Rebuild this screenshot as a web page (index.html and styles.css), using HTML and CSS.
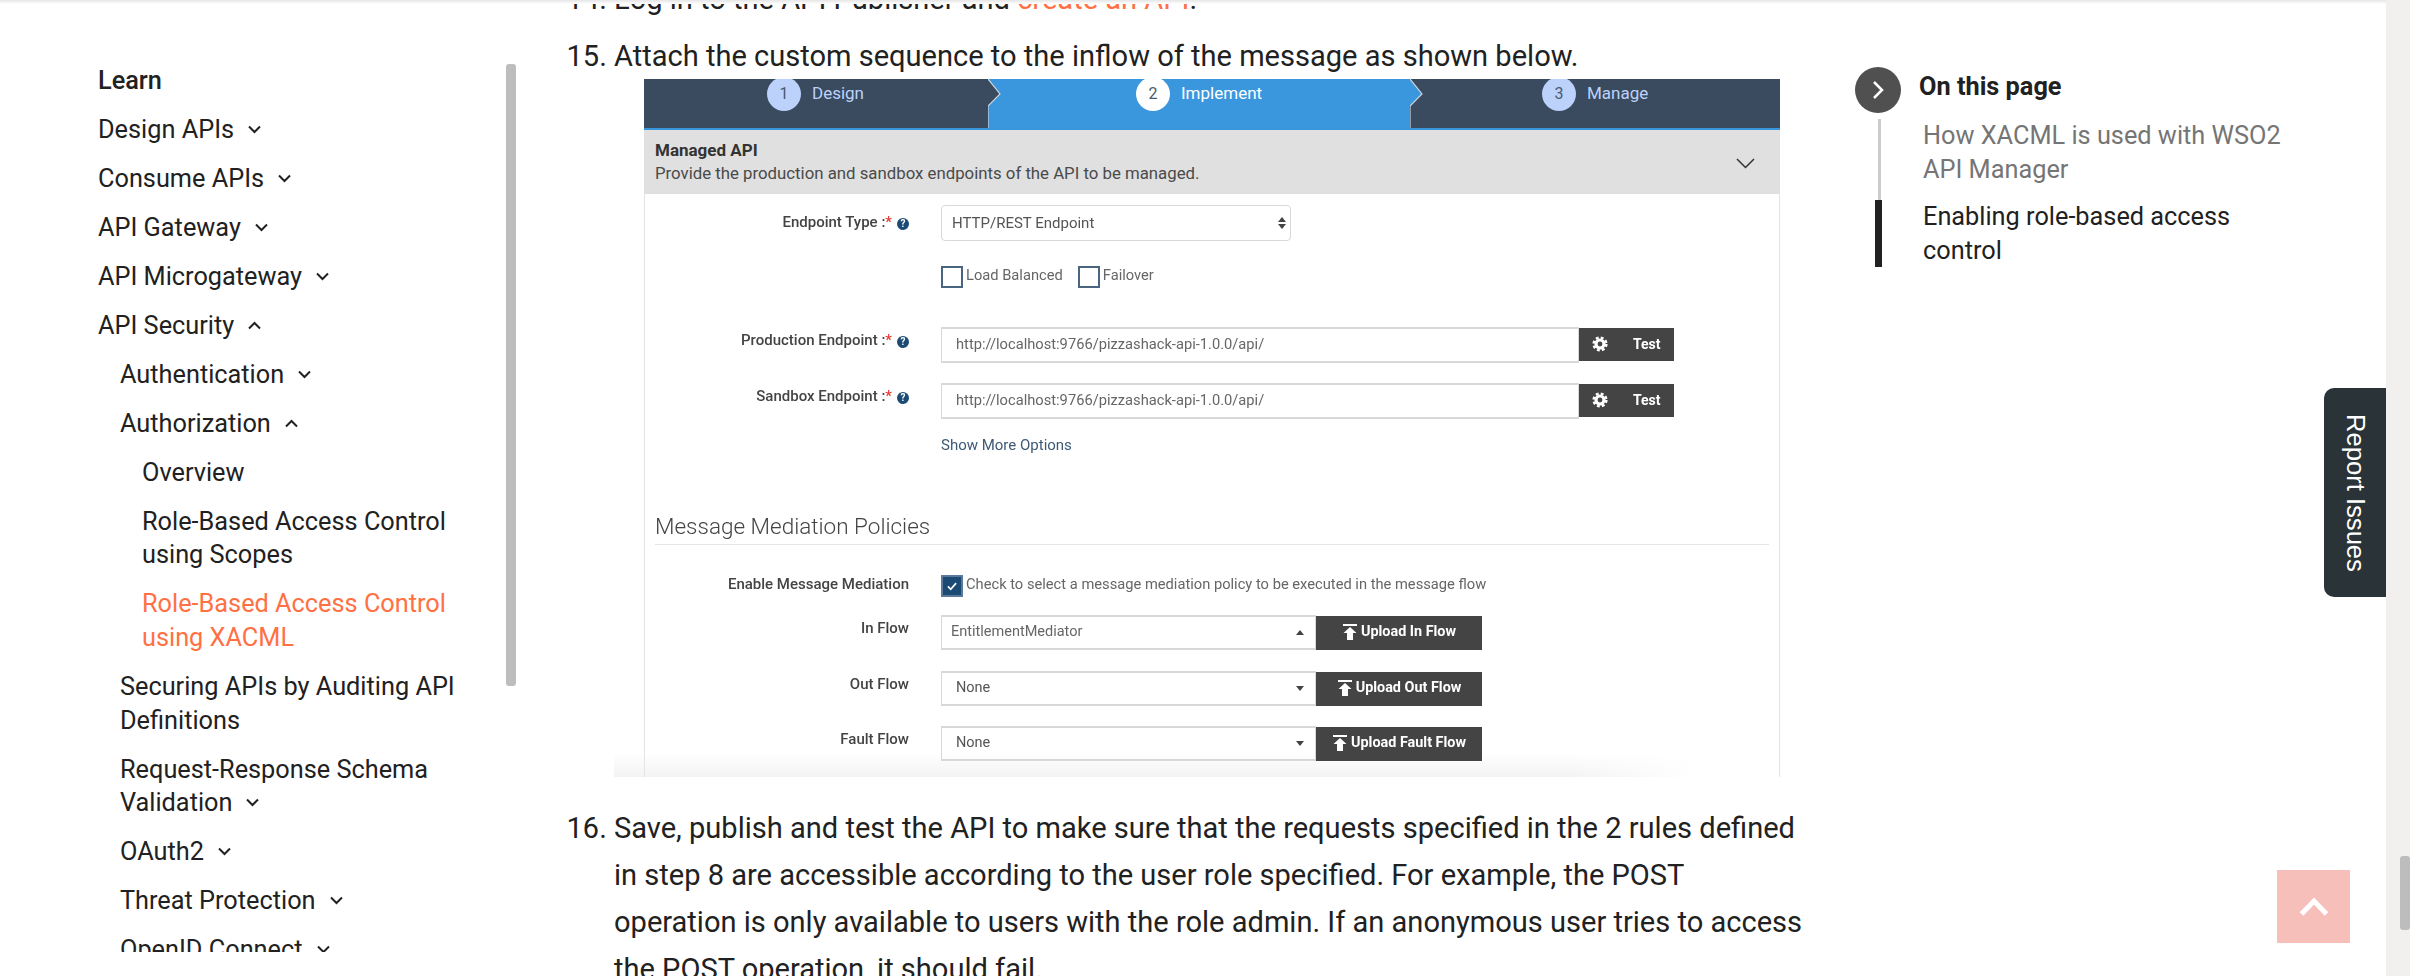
FILE: index.html
```html
<!DOCTYPE html>
<html>
<head>
  <title>Role-Based Access Control using XACML</title>
  <link rel="stylesheet" href="styles.css">
</head>
<body>

<div class="sidebar">
  <nav class="nav">
    <div class="nav-title">Learn</div>
    <ul class="nav-list">
      <li><a>Design APIs<svg class="chev" viewBox="0 0 13 9"><path d="M1 1.5l5.5 5.5 5.5-5.5"/></svg></a></li>
      <li><a>Consume APIs<svg class="chev" viewBox="0 0 13 9"><path d="M1 1.5l5.5 5.5 5.5-5.5"/></svg></a></li>
      <li><a>API Gateway<svg class="chev" viewBox="0 0 13 9"><path d="M1 1.5l5.5 5.5 5.5-5.5"/></svg></a></li>
      <li><a>API Microgateway<svg class="chev" viewBox="0 0 13 9"><path d="M1 1.5l5.5 5.5 5.5-5.5"/></svg></a></li>
      <li><a>API Security<svg class="chev" viewBox="0 0 13 9"><path d="M1 7.5l5.5-5.5 5.5 5.5"/></svg></a>
        <ul class="nav-list">
          <li><a>Authentication<svg class="chev" viewBox="0 0 13 9"><path d="M1 1.5l5.5 5.5 5.5-5.5"/></svg></a></li>
          <li><a>Authorization<svg class="chev" viewBox="0 0 13 9"><path d="M1 7.5l5.5-5.5 5.5 5.5"/></svg></a>
            <ul class="nav-list">
              <li><a>Overview</a></li>
              <li><a>Role-Based Access Control using Scopes</a></li>
              <li><a class="active">Role-Based Access Control using XACML</a></li>
            </ul>
          </li>
          <li><a>Securing APIs by Auditing API Definitions</a></li>
          <li><a>Request-Response Schema Validation<svg class="chev" viewBox="0 0 13 9"><path d="M1 1.5l5.5 5.5 5.5-5.5"/></svg></a></li>
          <li><a>OAuth2<svg class="chev" viewBox="0 0 13 9"><path d="M1 1.5l5.5 5.5 5.5-5.5"/></svg></a></li>
          <li><a>Threat Protection<svg class="chev" viewBox="0 0 13 9"><path d="M1 1.5l5.5 5.5 5.5-5.5"/></svg></a></li>
          <li><a>OpenID Connect<svg class="chev" viewBox="0 0 13 9"><path d="M1 1.5l5.5 5.5 5.5-5.5"/></svg></a></li>
        </ul>
      </li>
    </ul>
  </nav>
  <div class="nav-thumb"></div>
</div>

<main class="content">
  <ol class="steps-list" start="14">
    <li>Log in to the API Publisher and <a class="link">create an API</a>.</li>
    <li>Attach the custom sequence to the inflow of the message as shown below.
      <div class="shot">
        <div class="shot-inner">
          <div class="wizard">
            <div class="wizard-step step-one">
              <span class="step-num">1</span><span>Design</span>
              <svg class="step-arrow" viewBox="0 0 13 49"><path class="fill-dark" d="M0 0L12 15 0 27z"/><path class="edge" d="M0 0L12 15 0 27V49"/></svg>
            </div>
            <div class="wizard-step step-two">
              <span class="step-num">2</span><span>Implement</span>
              <svg class="step-arrow" viewBox="0 0 13 49"><path class="fill-blue" d="M0 0L12 15 0 27z"/><path class="edge" d="M0 0L12 15 0 27V49"/></svg>
            </div>
            <div class="wizard-step step-three">
              <span class="step-num">3</span><span>Manage</span>
            </div>
          </div>

          <div class="panel-head">
            <div>
              <div class="panel-title">Managed API</div>
              <div class="panel-sub">Provide the production and sandbox endpoints of the API to be managed.</div>
            </div>
            <svg class="panel-chev" viewBox="0 0 19 11"><path d="M1 1l8.500 8.500L18 1"/></svg>
          </div>

          <div class="form">
            <div class="row row-type">
              <div class="lbl lbl-mid">Endpoint Type :<span class="req">*</span><span class="help">?</span></div>
              <div class="select">HTTP/REST Endpoint<span class="updown"><i class="up"></i><i class="down"></i></span></div>
            </div>
            <div class="row row-checks">
              <div class="lbl"></div>
              <span class="check"></span><span class="check-text">Load Balanced</span>
              <span class="check check-next"></span><span class="check-text">Failover</span>
            </div>
            <div class="row row-prod">
              <div class="lbl lbl-top">Production Endpoint :<span class="req">*</span><span class="help">?</span></div>
              <div class="url">http://localhost:9766/pizzashack-api-1.0.0/api/</div>
              <div class="btn btn-test"><svg class="gear" viewBox="0 0 16 16"><circle class="gear-teeth" cx="8" cy="8" r="6.300"/><circle class="gear-ring" cx="8" cy="8" r="4"/></svg>Test</div>
            </div>
            <div class="row row-sand">
              <div class="lbl lbl-top">Sandbox Endpoint :<span class="req">*</span><span class="help">?</span></div>
              <div class="url">http://localhost:9766/pizzashack-api-1.0.0/api/</div>
              <div class="btn btn-test"><svg class="gear" viewBox="0 0 16 16"><circle class="gear-teeth" cx="8" cy="8" r="6.300"/><circle class="gear-ring" cx="8" cy="8" r="4"/></svg>Test</div>
            </div>
            <div class="show-more">Show More Options</div>
            <div class="policies">Message Mediation Policies</div>
            <div class="row row-enable">
              <div class="lbl lbl-enable">Enable Message Mediation</div>
              <span class="check check-on"><svg viewBox="0 0 22 22"><path d="M6 11.500l3.500 3.500 6.500-7.500"/></svg></span>
              <span class="check-text">Check to select a message mediation policy to be executed in the message flow</span>
            </div>
            <div class="row row-in">
              <div class="lbl lbl-top">In Flow</div>
              <div class="flow-select flow-in">EntitlementMediator<i class="up"></i></div>
              <div class="btn btn-upload upload-in"><svg class="upload" viewBox="0 0 16 17"><path d="M1 0h14v2H1zM8 3l6.500 6H11v7H5V9H1.500z"/></svg>Upload In Flow</div>
            </div>
            <div class="row row-out">
              <div class="lbl lbl-top">Out Flow</div>
              <div class="flow-select">None<i class="down"></i></div>
              <div class="btn btn-upload upload-out"><svg class="upload" viewBox="0 0 16 17"><path d="M1 0h14v2H1zM8 3l6.500 6H11v7H5V9H1.500z"/></svg>Upload Out Flow</div>
            </div>
            <div class="row row-fault">
              <div class="lbl lbl-top">Fault Flow</div>
              <div class="flow-select">None<i class="down"></i></div>
              <div class="btn btn-upload upload-fault"><svg class="upload" viewBox="0 0 16 17"><path d="M1 0h14v2H1zM8 3l6.500 6H11v7H5V9H1.500z"/></svg>Upload Fault Flow</div>
            </div>
          </div>
        </div>
      </div>
    </li>
    <li>Save, publish and test the API to make sure that the requests specified in the 2 rules defined in step 8 are accessible according to the user role specified. For example, the POST operation is only available to users with the role admin. If an anonymous user tries to access the POST operation, it should fail.</li>
  </ol>
</main>

<aside class="toc">
  <div class="toc-head">
    <span class="toc-toggle"><svg viewBox="0 0 14 20"><path d="M3 2l8 8-8 8"/></svg></span>
    <span class="toc-title">On this page</span>
  </div>
  <ul class="toc-list">
    <li>How XACML is used with WSO2 API Manager</li>
    <li class="toc-current">Enabling role-based access control</li>
  </ul>
</aside>

<div class="scrollbar"><div class="scroll-thumb"></div></div>

<a class="report">Report Issues</a>
<a class="to-top"><svg viewBox="0 0 30 20"><path d="M2.500 17L15 4l12.500 13"/></svg></a>

</body>
</html>
```

FILE: styles.css
```css
* {
  box-sizing: border-box;
}

html, body {
  height: 976px;
  margin: 0;
  overflow: hidden;
}

body {
  display: flex;
  background-color: #fff;
  color: #212121;
  font: 25.300px/33.600px Roboto, sans-serif;
}

body::before {
  content: "";
  position: fixed;
  top: 0;
  left: 0;
  right: 0;
  height: 4px;
  background: linear-gradient(#e6e6e6, #fff);
}

/* left nav */
.sidebar {
  display: flex;
  flex: 0 0 530px;
  height: 888px;
  margin-top: 64px;
  padding-left: 98px;
}

.nav {
  width: 408px;
  height: 888px;
  overflow: hidden;
}

.nav-title {
  font-weight: 500;
  margin-bottom: 15.4px;
}

.nav-list {
  list-style: none;
  margin: 0;
  padding: 0;
}

.nav-list .nav-list {
  margin-top: 15.4px;
  padding-left: 22px;
}

.nav-list li {
  margin-bottom: 15.4px;
}

.nav-list li:last-child {
  margin-bottom: 0;
}

.active {
  color: #ff7043;
}

.chev {
  width: 13px;
  height: 9px;
  margin-left: 14px;
  vertical-align: 4px;
}

.chev path {
  fill: none;
  stroke: #212121;
  stroke-width: 2;
}

.nav-thumb {
  width: 10px;
  height: 622px;
  background-color: #bdbdbd;
  border-radius: 3px;
}

/* main column */
.content {
  flex: 0 0 1280px;
}

.steps-list {
  margin: -24px 0 0;
  padding-left: 84px;
  font-size: 29.050px;
  line-height: 47px;
}

.steps-list > li {
  margin-bottom: 10px;
}

.link {
  color: #ff7043;
}

/* picture of the publisher form */
.shot {
  position: relative;
  isolation: isolate;
  width: 1166px;
  margin-top: -1px;
  margin-bottom: 28px;
  padding-left: 30px;
  line-height: 20px;
}

.shot::after {
  content: "";
  position: absolute;
  z-index: -1;
  left: 0;
  right: 0;
  bottom: 0;
  height: 24px;
  background: linear-gradient(rgba(240, 240, 240, 0), #f3f3f3);
  -webkit-mask-image: linear-gradient(to right, #000 82%, transparent 93%);
  mask-image: linear-gradient(to right, #000 82%, transparent 93%);
}

.shot-inner {
  height: 698px;
  color: #444;
  filter: blur(0.4px);
}

.wizard {
  display: flex;
  height: 51px;
  overflow: hidden;
  font-size: 17px;
  line-height: 29px;
  border-bottom: 2px solid #3b97dd;
}

.wizard-step {
  position: relative;
  display: flex;
  gap: 11px;
  height: 49px;
  background-color: #3a4a5f;
  color: #bcd2fb;
}

.step-one {
  width: 344px;
  padding-left: 123px;
}

.step-two {
  width: 422px;
  padding-left: 148px;
  background-color: #3b97dd;
  color: #fff;
}

.step-three {
  width: 370px;
  padding-left: 132px;
}

.step-num {
  display: flex;
  align-items: center;
  justify-content: center;
  width: 34px;
  height: 34px;
  margin-top: -2px;
  padding-bottom: 1px;
  border-radius: 50%;
  background-color: #bcd2fb;
  color: #4a5a6e;
  font-size: 16px;
}

.step-two .step-num {
  background-color: #fff;
}

.step-arrow {
  position: absolute;
  left: 100%;
  top: 0;
  z-index: 1;
  width: 13px;
  height: 49px;
}

.fill-dark {
  fill: #3a4a5f;
}

.fill-blue {
  fill: #3b97dd;
}

.edge {
  fill: none;
  stroke: #ced5da;
  stroke-width: 1.2;
}

.panel-head {
  display: flex;
  align-items: center;
  justify-content: space-between;
  height: 64px;
  padding: 0 25px 0 11px;
  background-color: #e0e0e0;
  font-size: 16.800px;
  line-height: 23px;
}

.panel-title {
  color: #333;
  font-weight: 700;
  font-size: 17px;
}

.panel-sub {
  color: #4a4a4a;
}

.panel-chev {
  width: 19px;
  height: 11px;
  margin-top: 2px;
}

.panel-chev path {
  fill: none;
  stroke: #333;
  stroke-width: 1.5;
}

.form {
  height: 583px;
  border-left: 1px solid #e4e4e4;
  border-right: 1px solid #e4e4e4;
  font-size: 15px;
}

.row {
  display: flex;
  align-items: flex-start;
}

.lbl {
  flex: 0 0 264px;
  margin-right: 32px;
  text-align: right;
  font-weight: 500;
}

.lbl-mid {
  margin-top: 7px;
}

.lbl-top {
  margin-top: 3px;
}

.lbl-enable {
  margin-top: -1px;
}

.req {
  color: #e53935;
}

.help {
  display: inline-block;
  width: 12px;
  height: 12px;
  margin-left: 5px;
  border-radius: 50%;
  background-color: #1b4a75;
  color: #fff;
  font-size: 10px;
  font-weight: 700;
  line-height: 12px;
  text-align: center;
  vertical-align: 0;
}

.row-type {
  padding-top: 11px;
}

.select {
  display: flex;
  align-items: center;
  justify-content: space-between;
  width: 350px;
  height: 36px;
  padding: 0 4px 0 10px;
  background-color: #fff;
  border: 1px solid #d8d8d8;
  border-radius: 4px;
  color: #555;
}

.updown {
  display: flex;
  flex-direction: column;
  gap: 2px;
}

.up, .down {
  display: block;
  width: 0;
  height: 0;
  border-left: 4px solid transparent;
  border-right: 4px solid transparent;
}

.up {
  border-bottom: 5px solid #444;
}

.down {
  border-top: 5px solid #444;
}

.row-checks {
  padding-top: 25px;
}

.check {
  flex: 0 0 22px;
  width: 22px;
  height: 22px;
  border: 2px solid #4a6580;
  background-color: #fff;
}

.check-next {
  margin-left: 15px;
}

.check-text {
  margin: -1px 0 0 3px;
  color: #666;
  font-size: 14.700px;
}

.check-on {
  background-color: #1b4a75;
  border-color: #5a7a99;
}

.check-on svg {
  display: block;
  width: 18px;
  height: 18px;
}

.check-on path {
  fill: none;
  stroke: #fff;
  stroke-width: 2;
}

.row-prod {
  padding-top: 39px;
}

.row-sand {
  padding-top: 20px;
}

.url {
  width: 638px;
  height: 36px;
  padding-left: 14px;
  line-height: 31px;
  border: 1px solid #d8d8d8;
  border-width: 2px 1px;
  color: #666;
  font-size: 14.700px;
}

.btn {
  display: flex;
  align-items: center;
  padding-bottom: 2px;
  background-color: #444;
  color: #fff;
  font-weight: 700;
  font-size: 14.400px;
}

.btn-test {
  width: 95px;
  height: 33px;
  margin-top: 1px;
  padding-left: 13px;
  gap: 25px;
  font-size: 14px;
}

.gear {
  width: 16px;
  height: 16px;
}

.gear-teeth {
  fill: none;
  stroke: #fff;
  stroke-width: 2.600;
  stroke-dasharray: 2.800 2.150;
}

.gear-ring {
  fill: none;
  stroke: #fff;
  stroke-width: 3.200;
}

.show-more {
  margin: 16px 0 0 296px;
  color: #3d5a76;
  font-size: 15px;
}

.policies {
  margin: 56px 10px 0;
  height: 34px;
  border-bottom: 1px solid #e5e5e5;
  color: #444;
  font-size: 22.500px;
  font-weight: 300;
  line-height: 31px;
}

.row-enable {
  padding-top: 30px;
}

.row-in {
  padding-top: 18px;
}

.row-out {
  padding-top: 21px;
}

.row-fault {
  padding-top: 20px;
}

.flow-select {
  display: flex;
  align-items: center;
  justify-content: space-between;
  width: 375px;
  height: 35px;
  padding: 0 11px 1px 14px;
  border: 1px solid #d8d8d8;
  border-width: 2px 1px;
  color: #555;
  font-size: 14.500px;
}

.flow-in {
  padding-left: 9px;
  color: #666;
}

.btn-upload {
  justify-content: center;
  gap: 3px;
  width: 166px;
  height: 34px;
  margin-top: 1px;
}

.upload {
  width: 16px;
  height: 17px;
  fill: #fff;
}

/* on this page */
.toc {
  flex: 0 0 531px;
  margin-left: 45px;
  padding-top: 67px;
}

.toc-head {
  display: flex;
  align-items: flex-start;
  gap: 18px;
}

.toc-toggle {
  display: flex;
  align-items: center;
  justify-content: center;
  width: 46px;
  height: 46px;
  border-radius: 50%;
  background-color: #505050;
}

.toc-toggle svg {
  width: 14px;
  height: 20px;
}

.toc-toggle path {
  fill: none;
  stroke: #fff;
  stroke-width: 2.500;
}

.toc-title {
  font-weight: 700;
  color: #212121;
  margin-top: 3px;
}

.toc-list {
  list-style: none;
  margin: 6px 0 0 23px;
  padding: 0;
  width: 417px;
}

.toc-list li {
  padding: 0 0 14px 42px;
  border-left: 3px solid #ccc;
  color: #757575;
}

.toc-list .toc-current {
  margin-left: -3px;
  padding-bottom: 0;
  padding-left: 41px;
  border-left: 7px solid #212121;
  color: #212121;
}

/* page scrollbar */
.scrollbar {
  position: fixed;
  top: 0;
  right: 0;
  width: 24px;
  height: 976px;
  padding: 856px 0 0 14px;
  background-color: #f1f0ef;
}

.scroll-thumb {
  width: 10px;
  height: 74px;
  background-color: #bdbdbd;
  border-radius: 3px;
}

/* floating buttons */
.report {
  position: fixed;
  top: 388px;
  right: 24px;
  display: flex;
  align-items: center;
  justify-content: center;
  width: 62px;
  height: 209px;
  background-color: #2a3338;
  border-radius: 10px 0 0 10px;
  color: #fff;
  font: 25.600px "Liberation Sans", Arial, sans-serif;
  writing-mode: vertical-rl;
}

.to-top {
  position: fixed;
  top: 870px;
  left: 2277px;
  display: flex;
  align-items: center;
  justify-content: center;
  width: 73px;
  height: 73px;
  background-color: #f7bfba;
}

.to-top svg {
  width: 30px;
  height: 20px;
}

.to-top path {
  fill: none;
  stroke: #fff;
  stroke-width: 5;
}
```
